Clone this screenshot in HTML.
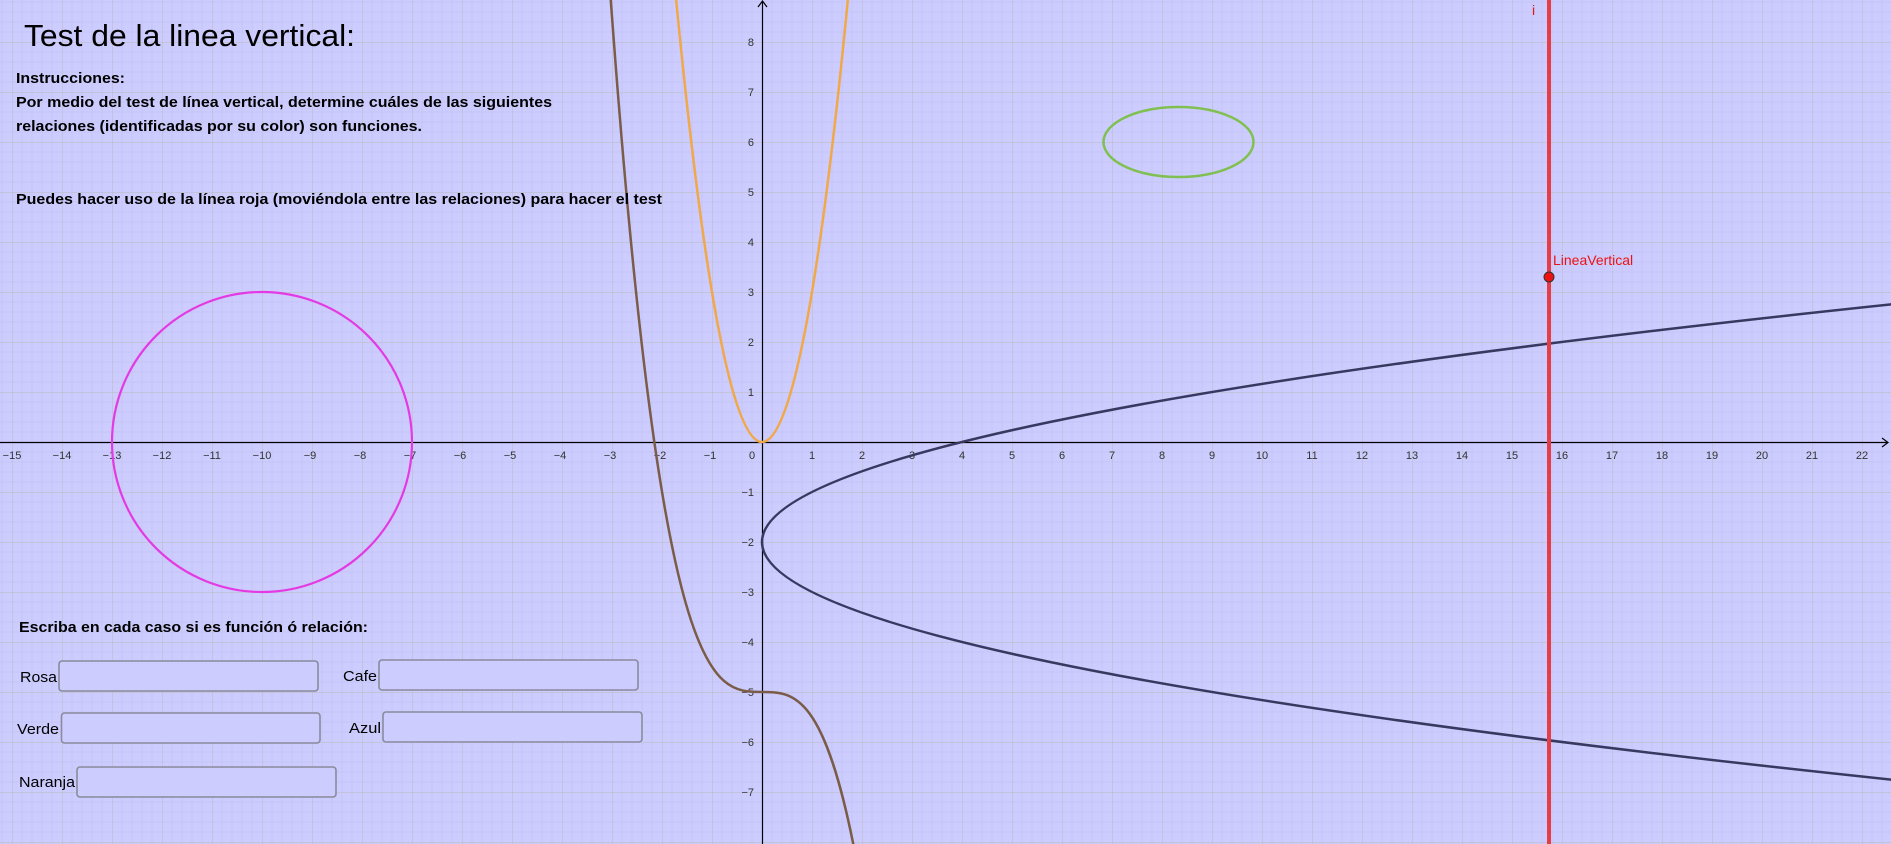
<!DOCTYPE html>
<html><head><meta charset="utf-8"><style>
html,body{margin:0;padding:0;width:1891px;height:844px;overflow:hidden;background:#ccccff}
svg{display:block}
text{font-family:"Liberation Sans",sans-serif}
</style></head><body>
<svg width="1891" height="844" viewBox="0 0 1891 844" xmlns="http://www.w3.org/2000/svg">
<defs>
<pattern id="g" width="50" height="50" patternUnits="userSpaceOnUse" patternTransform="translate(12,42)">
<path d="M10 0V50M20 0V50M30 0V50M40 0V50M0 10H50M0 20H50M0 30H50M0 40H50" stroke="#c5c5f4" stroke-width="1"/>
<path d="M0 0V50M0 0H50" stroke="#bdbdc8" stroke-width="1.2"/>
</pattern>
</defs>
<rect width="1891" height="844" fill="#ccccff"/>
<rect width="1891" height="844" fill="url(#g)"/>
<path d="M0 442.5H1888M1882 438L1888 442.5L1882 447" stroke="#000" stroke-width="1.2" fill="none"/>
<path d="M762.5 844V1M758 7L762.5 1L767 7" stroke="#000" stroke-width="1.2" fill="none"/>
<g font-size="11" fill="#333" text-anchor="middle">
<text x="12" y="459">−15</text><text x="62" y="459">−14</text><text x="112" y="459">−13</text><text x="162" y="459">−12</text><text x="212" y="459">−11</text><text x="262" y="459">−10</text><text x="310" y="459">−9</text><text x="360" y="459">−8</text><text x="410" y="459">−7</text><text x="460" y="459">−6</text><text x="510" y="459">−5</text><text x="560" y="459">−4</text><text x="610" y="459">−3</text><text x="660" y="459">−2</text><text x="710" y="459">−1</text><text x="752" y="459">0</text>
<text x="812" y="459">1</text><text x="862" y="459">2</text><text x="912" y="459">3</text><text x="962" y="459">4</text><text x="1012" y="459">5</text><text x="1062" y="459">6</text><text x="1112" y="459">7</text><text x="1162" y="459">8</text><text x="1212" y="459">9</text><text x="1262" y="459">10</text><text x="1312" y="459">11</text><text x="1362" y="459">12</text><text x="1412" y="459">13</text><text x="1462" y="459">14</text><text x="1512" y="459">15</text><text x="1562" y="459">16</text><text x="1612" y="459">17</text><text x="1662" y="459">18</text><text x="1712" y="459">19</text><text x="1762" y="459">20</text><text x="1812" y="459">21</text><text x="1862" y="459">22</text>
</g>
<g font-size="11" fill="#333" text-anchor="end">
<text x="754" y="46">8</text><text x="754" y="96">7</text><text x="754" y="146">6</text><text x="754" y="196">5</text><text x="754" y="246">4</text><text x="754" y="296">3</text><text x="754" y="346">2</text><text x="754" y="396">1</text>
<text x="754" y="496">−1</text><text x="754" y="546">−2</text><text x="754" y="596">−3</text><text x="754" y="646">−4</text><text x="754" y="696">−5</text><text x="754" y="746">−6</text><text x="754" y="796">−7</text>
</g>
<circle cx="262" cy="442" r="150" fill="none" stroke="#e43ae4" stroke-width="2.2"/>
<ellipse cx="1178.5" cy="142" rx="75" ry="35" fill="none" stroke="#80c050" stroke-width="2.5"/>
<path d="M676 -1.75Q762 885.75 848 -1.75" fill="none" stroke="#f0a848" stroke-width="2.5"/>
<path d="M609.5 -17.5C692 1133.5 774.5 417 857 863.5" fill="none" stroke="#7a5c48" stroke-width="2.5"/>
<path d="M1914 302Q-390 542 1914 782" fill="none" stroke="#383860" stroke-width="2.5"/>
<rect x="1547" y="0" width="4" height="844" fill="#e63c46"/>
<circle cx="1549" cy="277" r="5" fill="#ee1111" stroke="#333" stroke-width="1"/>
<text x="1553" y="265" font-size="14" fill="#ee1111">LineaVertical</text>
<text x="1532" y="15" font-size="14" fill="#ee1111">i</text>
<text x="24" y="46" font-size="31" fill="#000" textLength="331" lengthAdjust="spacingAndGlyphs">Test de la linea vertical:</text>
<g font-size="15" font-weight="bold" fill="#000">
<text x="16" y="83" textLength="109" lengthAdjust="spacingAndGlyphs">Instrucciones:</text>
<text x="16" y="107" textLength="536" lengthAdjust="spacingAndGlyphs">Por medio del test de línea vertical, determine cuáles de las siguientes</text>
<text x="16" y="131" textLength="406" lengthAdjust="spacingAndGlyphs">relaciones (identificadas por su color) son funciones.</text>
<text x="16" y="204" textLength="646" lengthAdjust="spacingAndGlyphs">Puedes hacer uso de la línea roja (moviéndola entre las relaciones) para hacer el test</text>
<text x="19" y="632" textLength="349" lengthAdjust="spacingAndGlyphs">Escriba en cada caso si es función ó relación:</text>
</g>
<g font-size="15" fill="#000">
<text x="20" y="682" textLength="37" lengthAdjust="spacingAndGlyphs">Rosa</text>
<text x="343" y="681" textLength="34" lengthAdjust="spacingAndGlyphs">Cafe</text>
<text x="17" y="734" textLength="42" lengthAdjust="spacingAndGlyphs">Verde</text>
<text x="349" y="733" textLength="32" lengthAdjust="spacingAndGlyphs">Azul</text>
<text x="19" y="787" textLength="56" lengthAdjust="spacingAndGlyphs">Naranja</text>
</g>
<g fill="#ccccff" stroke="#8a8a9c" stroke-width="1.6">
<rect x="59" y="661" width="259" height="30" rx="3"/>
<rect x="379" y="660" width="259" height="30" rx="3"/>
<rect x="61.5" y="713" width="258.5" height="30" rx="3"/>
<rect x="383" y="712" width="259" height="30" rx="3"/>
<rect x="77" y="767" width="259" height="30" rx="3"/>
</g>
</svg>
</body></html>
